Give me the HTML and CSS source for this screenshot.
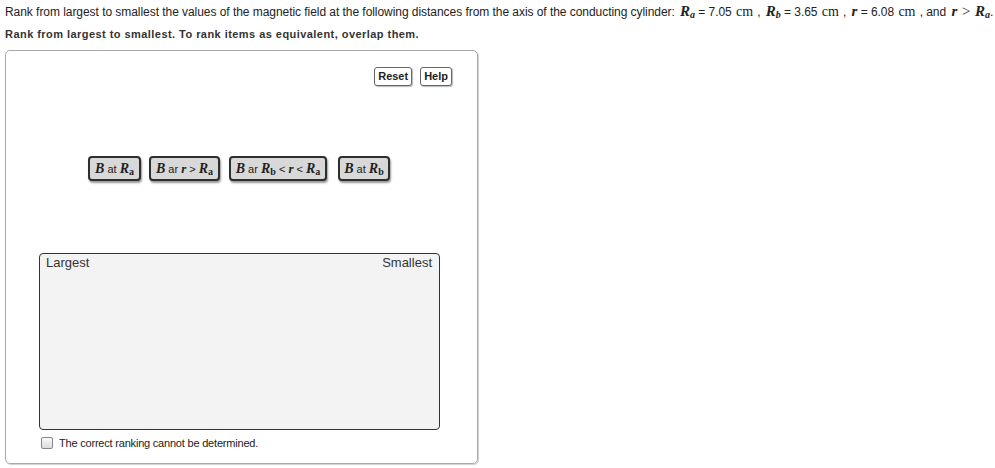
FILE: index.html
```html
<!DOCTYPE html>
<html>
<head>
<meta charset="utf-8">
<link rel="stylesheet" href="styles.css">
</head>
<body>
<p class="q">Rank from largest to smallest the values of the magnetic field at the following distances from the axis of the conducting cylinder: <span class="m"><i>R<sub>a</sub></i></span> = 7.05 <span class="u">cm</span> , <span class="m"><i>R<sub>b</sub></i></span> = 3.65 <span class="u">cm</span> , <span class="m"><i>r</i></span> = 6.08 <span class="u">cm</span> , and <span class="m"><i>r</i> <span class="op">&gt;</span> <i>R<sub>a</sub></i></span>.</p>
<p class="inst">Rank from largest to smallest. To rank items as equivalent, overlap them.</p>
<div class="panel">
  <div class="tools">
    <button class="btn">Reset</button>
    <button class="btn">Help</button>
  </div>
  <div class="tiles">
    <div class="tile t1"><i class="v">B</i> at <i class="v">R</i><b class="s">a</b></div>
    <div class="tile t2"><i class="v">B</i> ar <i class="v sm">r</i> &gt; <i class="v">R</i><b class="s">a</b></div>
    <div class="tile t3"><i class="v">B</i> ar <i class="v">R</i><b class="s">b</b> &lt; <i class="v sm">r</i> &lt; <i class="v">R</i><b class="s">a</b></div>
    <div class="tile t4"><i class="v">B</i> at <i class="v">R</i><b class="s">b</b></div>
  </div>
  <div class="rank">
    <div class="labels"><span>Largest</span><span>Smallest</span></div>
  </div>
  <label class="chk"><span class="box"></span>The correct ranking cannot be determined.</label>
</div>
</body>
</html>
```
FILE: styles.css
```css
html, body {
  margin: 0;
  padding: 0;
  background: #fff;
}
body {
  font-family: "Liberation Sans", Arial, sans-serif;
  color: #222;
  width: 995px;
  height: 468px;
  overflow: hidden;
}
.q {
  margin: 0;
  padding: 3px 0 0 5px;
  font-size: 12px;
  line-height: 16px;
  white-space: nowrap;
  letter-spacing: -0.05px;
}
.m {
  font-family: "Liberation Serif", "Times New Roman", serif;
  font-size: 15px;
  font-weight: bold;
  margin: 0 0 0 2px;
}
.m i { font-style: italic; }
.m .op { font-weight: normal; margin: 0 1px; }
.m sub {
  font-size: 10px;
  vertical-align: -2px;
  line-height: 0;
}
.u {
  font-family: "Liberation Serif", "Times New Roman", serif;
  font-size: 14px;
  margin: 0 1px;
}
.inst {
  margin: 0;
  padding: 7px 0 0 5px;
  font-size: 11px;
  line-height: 14px;
  font-weight: bold;
  color: #333;
  letter-spacing: 0.45px;
}
.panel {
  margin: 9px 0 0 5px;
  width: 471px;
  height: 412px;
  border: 1px solid #a8a8a8;
  border-radius: 5px;
  box-shadow: 1px 1px 1px #d0d0d0;
  box-sizing: content-box;
  display: flex;
  flex-direction: column;
}
.tools {
  display: flex;
  justify-content: flex-end;
  gap: 8px;
  padding: 16px 25px 0 0;
}
.btn {
  font-family: "Liberation Sans", Arial, sans-serif;
  font-size: 11px;
  font-weight: bold;
  color: #222;
  background: #fff;
  border: 1px solid #666;
  border-radius: 3px;
  height: 19px;
  padding: 0 3px;
  margin: 0;
  line-height: 17px;
  box-shadow: 1px 1px 1px #bbb;
}
.tiles {
  display: flex;
  padding: 70px 0 0 82px;
  height: 25px;
}
.tile {
  box-sizing: border-box;
  height: 25px;
  border: 2px solid #2e2e2e;
  border-radius: 4px;
  background: #d8d8d8;
  box-shadow: 1px 2px 2px #999;
  display: flex;
  align-items: center;
  justify-content: center;
  font-size: 11px;
  white-space: pre;
  color: #222;
}
.t1 { width: 53px; }
.t2 { width: 71px; margin-left: 8px; }
.t3 { width: 98px; margin-left: 9px; }
.t4 { width: 52px; margin-left: 11px; }
.v {
  font-family: "Liberation Serif", "Times New Roman", serif;
  font-size: 14px;
  font-style: italic;
  font-weight: bold;
}
.v.sm { font-size: 13px; }
.s {
  font-family: "Liberation Serif", "Times New Roman", serif;
  font-size: 10px;
  font-weight: bold;
  position: relative;
  top: 3px;
}
.rank {
  margin: 72px 0 0 33px;
  width: 401px;
  height: 177px;
  box-sizing: border-box;
  border: 1px solid #333;
  border-radius: 4px;
  background: #f3f3f3;
}
.labels {
  display: flex;
  justify-content: space-between;
  padding: 1px 7px 0 6px;
  font-size: 13px;
  line-height: 15px;
  color: #333;
}
.chk {
  display: flex;
  align-items: center;
  margin: 7px 0 0 35px;
  font-size: 11px;
  letter-spacing: -0.2px;
  color: #222;
}
.box {
  width: 10px;
  height: 10px;
  border: 1px solid #888;
  border-radius: 2px;
  background: linear-gradient(#fafafa, #dcdcdc);
  margin-right: 6px;
}
```
